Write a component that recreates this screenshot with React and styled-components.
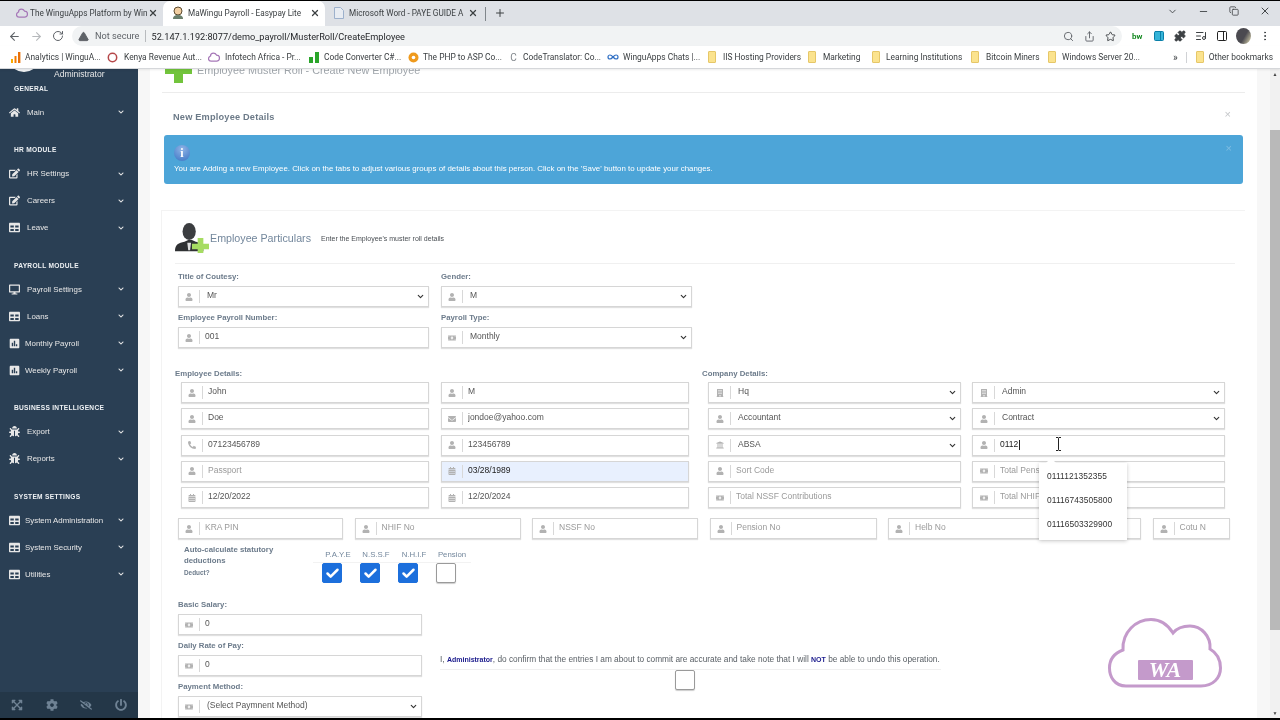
import styled, { createGlobalStyle } from 'styled-components';
import {
  ArrowLeft, ArrowRight, RotateCw, AlertTriangle, Search, Share, Star, Puzzle, ListMusic,
  PanelRight, MoreVertical, ChevronDown, Minus, Copy, X, Plus, Infinity as InfinityIcon, Check,
} from 'lucide-react';
import {
  FaHome, FaEdit, FaTable, FaDesktop, FaPoll, FaBug, FaChevronDown, FaExpandArrowsAlt,
  FaCog, FaEyeSlash, FaPowerOff, FaUser, FaEnvelope, FaPhoneAlt, FaCalendarAlt, FaUniversity,
  FaMoneyBillAlt, FaBuilding,
} from 'react-icons/fa';

const GlobalStyle = createGlobalStyle`
  html, body { margin: 0; padding: 0; background: #000; overflow: hidden; }
  * { box-sizing: border-box; }
`;

const Screen = styled.div`
  width: 1280px;
  height: 720px;
  display: flex;
  flex-direction: column;
  overflow: hidden;
  background: #000;
  padding: 1px 0 2px;
  font-family: 'Liberation Sans', Arial, sans-serif;
  filter: blur(0.3px);
`;

/* browser chrome */
const TabStrip = styled.div`
  height: 25px;
  flex: none;
  display: flex;
  align-items: flex-end;
  background: #dee1e6;
  padding-left: 13px;
  font-family: Roboto, sans-serif;
  font-size: 8.2px;
  color: #3c4043;
`;

const Tab = styled.div`
  width: ${p => p.$w}px;
  height: 25px;
  display: flex;
  align-items: center;
  gap: ${p => p.$gap}px;
  padding: 0 5px 2px ${p => p.$pad}px;
  border-radius: 7px 7px 0 0;
  background: ${p => (p.$active ? '#fff' : 'transparent')};
  svg { flex: none; }
`;

const TabTitle = styled.span`
  flex: 1;
  min-width: 0;
  white-space: nowrap;
`;

const TabSep = styled.span`
  width: 1px;
  height: 14px;
  margin: 0 8px 5px 2px;
  background: #80868b;
`;

const NewTab = styled.span`
  display: flex;
  padding-bottom: 7px;
`;

const WindowControls = styled.div`
  margin-left: auto;
  height: 25px;
  display: flex;
  align-items: center;
  padding: 0 9px 5px 0;
  gap: 20px;
  color: #44474a;
`;

const ToolBar = styled.div`
  height: 20px;
  flex: none;
  display: flex;
  align-items: center;
  background: #fff;
  padding-left: 8px;
  color: #5f6368;
  font-family: Roboto, sans-serif;
`;

const NavIcons = styled.div`
  width: 64px;
  display: flex;
  gap: 9px;
`;

const Omnibox = styled.div`
  width: 1050px;
  height: 20px;
  display: flex;
  align-items: center;
  padding: 0 6px;
  border-radius: 10px;
  background: #f1f3f4;
  font-size: 9.2px;
`;

const NotSecure = styled.span`
  margin-left: 6px;
  padding-right: 6px;
  border-right: 1px solid #b8bbbe;
  line-height: 12px;
  color: #5f6368;
`;

const Url = styled.span`
  margin-left: 5px;
  color: #26282b;
`;

const OmniActions = styled.div`
  margin-left: auto;
  display: flex;
  gap: 10px;
`;

const ExtIcons = styled.div`
  margin-left: 10px;
  display: flex;
  align-items: center;
  gap: 9px;
  color: #3c4043;
`;

const BwBadge = styled.span`
  width: 12px;
  font-size: 8px;
  font-weight: 700;
  color: #12881f;
`;

const AvatarDot = styled.span`
  width: 15px;
  height: 16px;
  margin: 0 -1px;
  border-radius: 50%;
  background: linear-gradient(120deg, #4b4a50 55%, #e5dfb6);
`;

const BookmarkBar = styled.div`
  height: 23px;
  flex: none;
  display: flex;
  align-items: center;
  padding: 0 7px 0 10px;
  background: #fff;
  border-bottom: 1px solid #d5d7da;
  box-shadow: 0 1px 2px rgba(0, 0, 0, 0.08);
  position: relative;
  z-index: 2;
  font-family: Roboto, sans-serif;
  font-size: 8.4px;
  color: #3c4043;
`;

const Bookmark = styled.div`
  width: ${p => p.$w}px;
  display: flex;
  align-items: center;
  gap: ${p => p.$gap || 5}px;
  white-space: nowrap;
`;

const BookmarkEnd = styled.div`
  margin-left: auto;
  display: flex;
  align-items: center;
  gap: 5px;
  white-space: nowrap;
`;

const MoreMarks = styled.span`
  font-size: 10px;
  padding-right: 8px;
  margin-right: 4px;
  border-right: 1px solid #d0d2d5;
`;

const FolderMark = styled.span`
  width: 8px;
  height: 12px;
  flex: none;
  background: #fbe38e;
  border: 1px solid #e6c768;
  border-radius: 1px;
`;

const Fav = styled.span`
  width: 11px;
  height: 11px;
  flex: none;
  display: inline-flex;
  align-items: center;
  justify-content: center;
  font-size: 10px;
  line-height: 11px;
  color: ${p => p.$c || '#80868b'};
`;

/* page */
const Body = styled.div`
  flex: 1;
  min-height: 0;
  display: flex;
  background: #fff;
`;

const Sidebar = styled.aside`
  width: 138px;
  flex: none;
  display: flex;
  flex-direction: column;
  background: #2a3f54;
  color: #e7e7e7;
  font-size: 7.9px;
  overflow: hidden;
`;

const Profile = styled.div`
  height: 9px;
  flex: none;
  display: flex;
  padding-left: 8px;
`;

const ProfilePic = styled.span`
  width: 32px;
  height: 32px;
  flex: none;
  align-self: flex-end;
  margin-bottom: 6px;
  border-radius: 50%;
  background: #2f80c2;
  border: 3px solid #f2f4f6;
`;

const ProfileName = styled.span`
  margin-left: 14px;
  font-size: 8.6px;
  line-height: 10px;
`;

const SectionTitle = styled.div`
  height: 20px;
  flex: none;
  display: flex;
  align-items: center;
  padding-left: 14px;
  margin-top: ${p => (p.$first ? 0 : 14.5)}px;
  font-size: 6.6px;
  font-weight: 700;
  letter-spacing: 0.3px;
  color: #eef1f4;
`;

const MenuItem = styled.div`
  height: 27px;
  flex: none;
  display: flex;
  align-items: center;
  padding: 1px 14px 0 9px;
  gap: ${p => p.$gap}px;
  svg:first-child { flex: none; font-size: 11px; }
  svg:last-child { margin-left: auto; font-size: 6px; flex: none; }
`;

const SideFooter = styled.div`
  margin-top: auto;
  height: 26px;
  flex: none;
  display: grid;
  grid-template-columns: repeat(4, 1fr);
  align-items: center;
  justify-items: center;
  background: #243748;
  color: #6f8294;
  font-size: 12px;
`;

const Main = styled.main`
  flex: 1;
  min-width: 0;
  padding: 0 13px 0 12px;
  background: #f7f7f7;
`;

const Content = styled.div`
  height: 100%;
  padding: 0 12px;
  background: #fff;
  overflow: hidden;
  position: relative;
`;

const PageHead = styled.div`
  height: 24px;
  display: flex;
  align-items: flex-start;
  padding-left: 3px;
  border-bottom: 1px solid #ececec;
`;

const PageHeadIcon = styled.svg`
  width: 27px;
  height: 27px;
  flex: none;
  margin-top: -13px;
`;

const PageHeadText = styled.span`
  margin: -5px 0 0 5px;
  font-size: 10.8px;
  line-height: 12px;
  color: #a0a6ac;
`;

const PanelHead = styled.div`
  height: 42px;
  display: flex;
  justify-content: space-between;
  padding: 18px 14px 0 11px;
`;

const PanelTitle = styled.h2`
  margin: 0;
  font-size: 9.2px;
  line-height: 12px;
  letter-spacing: 0.2px;
  font-weight: 700;
  color: #6c7a88;
`;

const CloseMark = styled.span`
  margin-top: -3px;
  font-size: 11px;
  line-height: 12px;
  color: ${p => p.$c || '#c4c6c9'};
`;

const Alert = styled.div`
  height: 49px;
  margin: 0 2px;
  padding: 10px 11px 0 10px;
  border-radius: 3px;
  background: #4da5d8;
  color: #fff;
  font-size: 7.9px;
`;

const AlertTop = styled.div`
  display: flex;
  justify-content: space-between;
  height: 16px;
`;

const InfoBadge = styled.span`
  width: 16px;
  height: 16px;
  border-radius: 50%;
  display: flex;
  align-items: center;
  justify-content: center;
  font-family: 'Liberation Serif', serif;
  font-size: 12px;
  font-weight: 700;
  color: #fff;
  background: radial-gradient(circle at 50% 25%, #8fb4e6, #3b74c4);
`;

const AlertText = styled.div`
  margin-top: 2px;
  line-height: 11px;
`;

const Card = styled.section`
  margin: 26px 0 0 -1px;
  padding: 1px 10px 0 13px;
  border: 1px solid #f3f3f3;
  border-right: 0;
  border-bottom: 0;
`;

const CardHead = styled.div`
  height: 52px;
  display: flex;
  align-items: center;
  border-bottom: 1px solid #f0f0f0;
`;

const CardHeadTitle = styled.span`
  margin-left: 1px;
  font-size: 10.7px;
  color: #73879c;
`;

const CardHeadNote = styled.span`
  margin-left: 10px;
  margin-top: 1px;
  font-size: 7px;
  color: #4a4f54;
`;

const TopForm = styled.div`
  margin: 7px 0 0 3px;
  display: grid;
  grid-template-columns: 251px 251px;
  column-gap: 12px;
`;

const FormBlock = styled.div`
  height: 41px;
`;

const Label = styled.div`
  height: 10px;
  margin-bottom: ${p => p.$mb ?? 5}px;
  font-size: 7.8px;
  line-height: 12px;
  font-weight: 700;
  color: #6c7b8b;
  white-space: nowrap;
`;

const FieldBox = styled.div`
  position: relative;
  height: 21px;
  display: flex;
  align-items: center;
  background: ${p => (p.$filled ? '#e8f0fe' : '#fff')};
  border: 1px solid #d6d6d6;
  box-shadow: 0 1px 1px rgba(0, 0, 0, 0.12);
`;

const FieldIcon = styled.span`
  width: var(--slot, 21px);
  height: 13px;
  flex: none;
  display: flex;
  align-items: center;
  justify-content: center;
  border-right: 1px solid #d8d8d8;
  color: #b2b2b2;
  font-size: 8px;
`;

const FieldInput = styled.input`
  flex: 1;
  width: 100%;
  min-width: 0;
  height: 100%;
  padding: 0 0 3px 5px;
  border: 0;
  outline: 0;
  background: transparent;
  font-family: 'Liberation Sans', Arial, sans-serif;
  font-size: 8.5px;
  color: ${p => (p.$dark ? '#222' : '#555')};
  &::placeholder { color: #9a9a9a; opacity: 1; }
`;

const FieldSelect = styled.select`
  flex: 1;
  min-width: 0;
  height: 100%;
  padding: 0 0 3px 7px;
  border: 0;
  outline: 0;
  appearance: none;
  background: transparent;
  font-family: 'Liberation Sans', Arial, sans-serif;
  font-size: 8.5px;
  color: #555;
`;

const SelectArrow = styled.span`
  display: flex;
  padding-right: 3px;
  color: #333;
  pointer-events: none;
`;

const DetailsRow = styled.div`
  margin-top: 15px;
  display: flex;
  gap: 12px;
`;

const DetailsGroup = styled.div`
  width: ${p => p.$w}px;
`;

const DetailsGrid = styled.div`
  --slot: ${p => p.$slot}px;
  margin-left: 6px;
  display: grid;
  grid-template-columns: repeat(2, ${p => p.$col}px);
  column-gap: ${p => p.$gap}px;
  row-gap: 5.25px;
`;

const NumbersRow = styled.div`
  margin: 10px 0 0 3px;
  display: grid;
  grid-template-columns: 165px 166px 166px 167px 253px 77px;
  column-gap: 11.5px;
`;

const DeductRow = styled.div`
  height: 55px;
  margin-top: 5px;
  padding-left: 9px;
  display: flex;
`;

const DeductText = styled.div`
  width: 129px;
  font-size: 7.8px;
  line-height: 11px;
  font-weight: 700;
  color: #6c7b8b;
`;

const DeductNote = styled.div`
  margin-top: 2px;
  font-size: 6.4px;
  line-height: 10px;
`;

const DeductCol = styled.div`
  width: 38px;
  margin-top: 6px;
  display: flex;
  flex-direction: column;
  align-items: center;
`;

const DeductLabel = styled.div`
  height: 13px;
  align-self: stretch;
  padding-left: 6px;
  margin-right: -6px;
  text-align: center;
  font-size: 7.8px;
  line-height: 10px;
  white-space: nowrap;
  color: #73879c;
  border-bottom: 1px solid #f2f2f2;
`;

const CheckBox = styled.span`
  width: ${p => p.$w || 20}px;
  height: 20px;
  display: flex;
  align-items: center;
  justify-content: center;
  border-radius: 2px;
  color: #fff;
  background: ${p => (p.$on ? '#1c6fdc' : '#fff')};
  border: 1px solid ${p => (p.$on ? '#1c6fdc' : '#9a9a9a')};
  box-shadow: ${p => (p.$on ? 'none' : '0 1px 1px rgba(0,0,0,.2)')};
`;

const BottomRow = styled.div`
  margin-left: 3px;
  display: flex;
  gap: 18px;
`;

const PayCol = styled.div`
  width: 244px;
  flex: none;
`;

const ConfirmCol = styled.div`
  width: 501px;
  padding-top: 55px;
`;

const ConfirmText = styled.div`
  height: 16px;
  font-size: 8.3px;
  line-height: 10px;
  white-space: nowrap;
  color: #5a6066;
  border-bottom: 1px solid #f0f0f0;
`;

const ConfirmName = styled.b`
  font-size: 7px;
  color: #1a1a8c;
`;

const ConfirmBox = styled(CheckBox)`
  margin-left: 235px;
`;

const Watermark = styled.svg`
  position: absolute;
  left: 958px;
  top: 549px;
  width: 114px;
  height: 70px;
`;

const Suggestions = styled.div`
  position: absolute;
  z-index: 3;
  left: 66px;
  top: 27px;
  width: 88px;
  height: 77px;
  padding-top: 1px;
  background: #fff;
  box-shadow: 0 1px 4px rgba(0, 0, 0, 0.22);
  font-size: 8.4px;
  color: #333;
  &::before {
    content: '';
    position: absolute;
    top: -5px;
    left: 7px;
    border: 5px solid transparent;
    border-top: 0;
    border-bottom-color: #fff;
  }
`;

const Suggestion = styled.div`
  height: 24px;
  padding-left: 8px;
  line-height: 24px;
  letter-spacing: 0.1px;
`;

const TextCaret = styled.span`
  position: absolute;
  left: 46px;
  top: 4px;
  width: 1px;
  height: 10px;
  background: #222;
`;

const IBeam = styled.svg`
  position: absolute;
  left: 82px;
  top: 1px;
  width: 7px;
  height: 14px;
`;

const ScrollTrack = styled.div`
  width: 10px;
  flex: none;
  display: flex;
  flex-direction: column;
  background: #f1f1f1;
`;

const ScrollArrow = styled.span`
  height: 10px;
  flex: none;
  text-align: center;
  font-size: 5px;
  line-height: 10px;
  color: #444;
`;

const ScrollThumb = styled.div`
  height: 500px;
  margin-top: 51px;
  margin-bottom: auto;
  background: #b9b9b9;
`;

const tabIcon = {
  cloud: (
    <svg width="12" height="10" viewBox="0 0 24 20" fill="none" stroke="#a678b8" strokeWidth="2.5">
      <path d="M6 18C2 18 1 15 1 13c0-3 2-4 4-5C5 4 8 2 11 2c3 0 5 2 6 4 3 0 6 2 6 6 0 3-2 6-5 6Z" />
    </svg>
  ),
  face: (
    <svg width="12" height="13" viewBox="0 0 12 13">
      <circle cx="6" cy="5" r="4" fill="#f2cfa2" stroke="#5b4a2f" />
      <path d="M1 13c0-3 2-4 5-4s5 1 5 4Z" fill="#6a7f6c" />
    </svg>
  ),
  doc: (
    <svg width="10" height="12" viewBox="0 0 10 12" fill="#e8ecf2" stroke="#9db1cc">
      <path d="M.5.5h6l3 3v8H.5Z" />
    </svg>
  ),
};

const bars = (
  <svg width="11" height="11" viewBox="0 0 11 11">
    <path d="M1 7h2v4H1Z" fill="#f9ab00" />
    <path d="M4.5 4h2v7h-2Z" fill="#f57c00" />
    <path d="M8 0h2.400v11H8Z" fill="#e8710a" />
  </svg>
);

const bookmarks = [
  { w: 97, gap: 4, title: 'Analytics | WinguA...', icon: bars },
  { w: 101, gap: 6, title: 'Kenya Revenue Aut...', icon: <svg width="11" height="11" viewBox="0 0 11 11" fill="none" stroke="#b5484a" strokeWidth="1.5"><circle cx="5.5" cy="5.5" r="4.2" /></svg> },
  { w: 101, gap: 5, title: 'Infotech Africa - Pr...', icon: tabIcon.cloud },
  { w: 99, gap: 4, title: 'Code Converter C#...', icon: <Fav $c="#2aa52a"><svg width="11" height="11" viewBox="0 0 11 11" fill="#2aa52a"><path d="M0 5h4v6H0ZM6 0h4v11H6Z" /></svg></Fav> },
  { w: 100, gap: 4, title: 'The PHP to ASP Co...', icon: <svg width="11" height="11" viewBox="0 0 11 11"><circle cx="5.5" cy="5.5" r="5" fill="#ef9a1d" /><circle cx="5.5" cy="5.5" r="1.8" fill="#fff" /></svg> },
  { w: 99, gap: 4, title: 'CodeTranslator: Co...', icon: <Fav>C</Fav> },
  { w: 101, gap: 4, title: 'WinguApps Chats |...', icon: <InfinityIcon size={12} color="#2f6fc4" strokeWidth={2.4} /> },
  { w: 100, gap: 7, title: 'IIS Hosting Providers' },
  { w: 64, gap: 7, title: 'Marketing' },
  { w: 99, gap: 6, title: 'Learning Institutions' },
  { w: 77, gap: 7, title: 'Bitcoin Miners' },
  { w: 100, gap: 6, title: 'Windows Server 20...' },
];

const menu = [
  { title: 'GENERAL', first: true, items: [{ icon: <FaHome />, label: 'Main', gap: 7 }] },
  { title: 'HR MODULE', items: [
    { icon: <FaEdit />, label: 'HR Settings', gap: 7 },
    { icon: <FaEdit />, label: 'Careers', gap: 7 },
    { icon: <FaTable />, label: 'Leave', gap: 7 },
  ] },
  { title: 'PAYROLL MODULE', items: [
    { icon: <FaDesktop />, label: 'Payroll Settings', gap: 7 },
    { icon: <FaTable />, label: 'Loans', gap: 7 },
    { icon: <FaPoll />, label: 'Monthly Payroll', gap: 5 },
    { icon: <FaPoll />, label: 'Weekly Payroll', gap: 5 },
  ] },
  { title: 'BUSINESS INTELLIGENCE', items: [
    { icon: <FaBug />, label: 'Export', gap: 7 },
    { icon: <FaBug />, label: 'Reports', gap: 7 },
  ] },
  { title: 'SYSTEM SETTINGS', items: [
    { icon: <FaTable />, label: 'System Administration', gap: 5 },
    { icon: <FaTable />, label: 'System Security', gap: 5 },
    { icon: <FaTable />, label: 'Utilities', gap: 5 },
  ] },
];

function Field({ icon = <FaUser />, value, placeholder, select, filled, dark, children }) {
  return (
    <FieldBox $filled={filled}>
      <FieldIcon>{icon}</FieldIcon>
      {select
        ? <FieldSelect defaultValue={value}><option>{value}</option></FieldSelect>
        : <FieldInput defaultValue={value} placeholder={placeholder} $dark={dark} />}
      {select && <SelectArrow><ChevronDown size={9} strokeWidth={3} /></SelectArrow>}
      {children}
    </FieldBox>
  );
}

function LabelledField({ label, ...rest }) {
  return (
    <FormBlock>
      <Label>{label}</Label>
      <Field {...rest} />
    </FormBlock>
  );
}

export default function App() {
  return (
    <Screen>
      <GlobalStyle />
      <TabStrip>
        <Tab $w={150} $pad={3} $gap={2}>
          {tabIcon.cloud}<TabTitle>The WinguApps Platform by Win</TabTitle><X size={10} strokeWidth={3} />
        </Tab>
        <Tab $w={162} $pad={9} $gap={4} $active>
          {tabIcon.face}<TabTitle>MaWingu Payroll - Easypay Lite</TabTitle><X size={10} strokeWidth={3} />
        </Tab>
        <Tab $w={158} $pad={9} $gap={5}>
          {tabIcon.doc}<TabTitle>Microsoft Word - PAYE GUIDE A</TabTitle><X size={10} strokeWidth={3} />
        </Tab>
        <TabSep />
        <NewTab><Plus size={12} /></NewTab>
        <WindowControls>
          <ChevronDown size={11} />
          <Minus size={11} />
          <Copy size={10} />
          <X size={12} />
        </WindowControls>
      </TabStrip>

      <ToolBar>
        <NavIcons>
          <ArrowLeft size={13} />
          <ArrowRight size={13} color="#b6b9bc" />
          <RotateCw size={12} />
        </NavIcons>
        <Omnibox>
          <AlertTriangle size={11} fill="#5f6368" color="#5f6368" />
          <NotSecure>Not secure</NotSecure>
          <Url>52.147.1.192:8077/demo_payroll/MusterRoll/CreateEmployee</Url>
          <OmniActions>
            <Search size={11} />
            <Share size={11} />
            <Star size={11} color="#3c4043" />
          </OmniActions>
        </Omnibox>
        <ExtIcons>
          <BwBadge>bw</BwBadge>
          <PanelRight size={12} color="#0a7fa8" fill="#35b4d8" />
          <Puzzle size={12} fill="#3c4043" />
          <ListMusic size={12} />
          <PanelRight size={12} color="#222" />
          <AvatarDot />
          <MoreVertical size={12} />
        </ExtIcons>
      </ToolBar>

      <BookmarkBar>
        {bookmarks.map(b => (
          <Bookmark key={b.title} $w={b.w} $gap={b.gap}>
            {b.icon || <FolderMark />}
            {b.title}
          </Bookmark>
        ))}
        <BookmarkEnd>
          <MoreMarks>»</MoreMarks>
          <FolderMark />
          Other bookmarks
        </BookmarkEnd>
      </BookmarkBar>

      <Body>
        <Sidebar>
          <Profile>
            <ProfilePic />
            <ProfileName>Administrator</ProfileName>
          </Profile>
          {menu.map(section => (
            <div key={section.title}>
              <SectionTitle $first={section.first}>{section.title}</SectionTitle>
              {section.items.map(item => (
                <MenuItem key={item.label} $gap={item.gap}>
                  {item.icon}
                  {item.label}
                  <FaChevronDown />
                </MenuItem>
              ))}
            </div>
          ))}
          <SideFooter>
            <FaExpandArrowsAlt />
            <FaCog />
            <FaEyeSlash />
            <FaPowerOff />
          </SideFooter>
        </Sidebar>

        <Main>
          <Content>
            <PageHead>
              <PageHeadIcon viewBox="0 0 27 27">
                <path d="M9 0h9v9h9v9h-9v9H9v-9H0V9h9Z" fill="#72c43c" />
              </PageHeadIcon>
              <PageHeadText>Employee Muster Roll - Create New Employee</PageHeadText>
            </PageHead>

            <PanelHead>
              <PanelTitle>New Employee Details</PanelTitle>
              <CloseMark>×</CloseMark>
            </PanelHead>

            <Alert>
              <AlertTop>
                <InfoBadge>i</InfoBadge>
                <CloseMark $c="#7fbde2">×</CloseMark>
              </AlertTop>
              <AlertText>
                You are Adding a new Employee. Click on the tabs to adjust various groups of details about this person. Click on the 'Save' button to update your changes.
              </AlertText>
            </Alert>

            <Card>
              <CardHead>
                <svg width="34" height="32" viewBox="0 0 36 32">
                  <path d="M0 30c0-7 4-9 10-10l4-2h4l4 2c4 1 6 2 8 6v4Z" fill="#2f3133" />
                  <ellipse cx="15" cy="9" rx="7" ry="9" fill="#3b3d40" />
                  <path d="M13 21h4l-1 8h-2Z" fill="#dfe0e0" />
                  <path d="M24 16h6v6h6v6h-6v4h-6v-4h-6v-6h6Z" fill="#a6dc62" />
                </svg>
                <CardHeadTitle>Employee Particulars</CardHeadTitle>
                <CardHeadNote>Enter the Employee's muster roll details</CardHeadNote>
              </CardHead>

              <TopForm>
                <LabelledField label="Title of Coutesy:" value="Mr" select />
                <LabelledField label="Gender:" value="M" select />
                <LabelledField label="Employee Payroll Number:" value="001" />
                <LabelledField label="Payroll Type:" value="Monthly" select icon={<FaMoneyBillAlt />} />
              </TopForm>

              <DetailsRow>
                <DetailsGroup $w={515}>
                  <Label $mb={4}>Employee Details:</Label>
                  <DetailsGrid $col={248} $gap={12} $slot={21}>
                    <Field value="John" />
                    <Field value="M" />
                    <Field value="Doe" />
                    <Field value="jondoe@yahoo.com" icon={<FaEnvelope />} />
                    <Field value="07123456789" icon={<FaPhoneAlt />} />
                    <Field value="123456789" />
                    <Field placeholder="Passport" />
                    <Field value="03/28/1989" icon={<FaCalendarAlt />} filled dark />
                    <Field value="12/20/2022" icon={<FaCalendarAlt />} />
                    <Field value="12/20/2024" icon={<FaCalendarAlt />} />
                  </DetailsGrid>
                </DetailsGroup>
                <DetailsGroup $w={530}>
                  <Label $mb={4}>Company Details:</Label>
                  <DetailsGrid $col={253} $gap={11} $slot={22}>
                    <Field value="Hq" select icon={<FaBuilding />} />
                    <Field value="Admin" select icon={<FaBuilding />} />
                    <Field value="Accountant" select />
                    <Field value="Contract" select />
                    <Field value="ABSA" select icon={<FaUniversity />} />
                    <Field value="0112" dark>
                      <TextCaret />
                      <IBeam viewBox="0 0 7 14" fill="none" stroke="#222" strokeWidth="1">
                        <path d="M1 .5h2l.5 1 .5-1h2M3.500 1.500v11M1 13.500h2l.5-1 .5 1h2" />
                      </IBeam>
                      <Suggestions>
                        <Suggestion>0111121352355</Suggestion>
                        <Suggestion>01116743505800</Suggestion>
                        <Suggestion>01116503329900</Suggestion>
                      </Suggestions>
                    </Field>
                    <Field placeholder="Sort Code" />
                    <Field placeholder="Total Pension Contributions" icon={<FaMoneyBillAlt />} />
                    <Field placeholder="Total NSSF Contributions" icon={<FaMoneyBillAlt />} />
                    <Field placeholder="Total NHIF Contributions" icon={<FaMoneyBillAlt />} />
                  </DetailsGrid>
                </DetailsGroup>
              </DetailsRow>

              <NumbersRow>
                <Field placeholder="KRA PIN" />
                <Field placeholder="NHIF No" />
                <Field placeholder="NSSF No" />
                <Field placeholder="Pension No" />
                <Field placeholder="Helb No" />
                <Field placeholder="Cotu N" />
              </NumbersRow>

              <DeductRow>
                <DeductText>
                  Auto-calculate statutory deductions
                  <DeductNote>Deduct?</DeductNote>
                </DeductText>
                {[['P.A.Y.E', true], ['N.S.S.F', true], ['N.H.I.F', true], ['Pension', false]].map(([name, on]) => (
                  <DeductCol key={name}>
                    <DeductLabel>{name}</DeductLabel>
                    <CheckBox $on={on}>{on && <Check size={15} strokeWidth={4} />}</CheckBox>
                  </DeductCol>
                ))}
              </DeductRow>

              <BottomRow>
                <PayCol>
                  <LabelledField label="Basic Salary:" value="0" icon={<FaMoneyBillAlt />} />
                  <LabelledField label="Daily Rate of Pay:" value="0" icon={<FaMoneyBillAlt />} />
                  <LabelledField label="Payment Method:" value="(Select Paymnent Method)" select icon={<FaMoneyBillAlt />} />
                </PayCol>
                <ConfirmCol>
                  <ConfirmText>
                    I, <ConfirmName>Administrator</ConfirmName>, do confirm that the entries I am about to commit are accurate and take note that I will <ConfirmName>NOT</ConfirmName> be able to undo this operation.
                  </ConfirmText>
                  <ConfirmBox />
                </ConfirmCol>
              </BottomRow>
            </Card>

            <Watermark viewBox="0 0 114 70">
              <path
                d="M18 68C6 68 1.500 58 1.500 50 1.500 41 7 35 15 32 14 14 28 1.500 43 1.500 52 1.500 60 7 65 15 69 10 76 8 82 8 93 8 103 18 102 31 109 35 112.500 42 112.500 50 112.500 60 105 68 93 68Z"
                fill="#fff"
                stroke="#c49acb"
                strokeWidth="3"
              />
              <rect x="30" y="42" width="55" height="20" rx="1" fill="#c49acb" />
              <text x="57" y="59" textAnchor="middle" fontFamily="'Liberation Serif', serif" fontStyle="italic" fontWeight="700" fontSize="22" fill="#fff">WA</text>
            </Watermark>
          </Content>
        </Main>

        <ScrollTrack>
          <ScrollArrow>▲</ScrollArrow>
          <ScrollThumb />
          <ScrollArrow>▼</ScrollArrow>
        </ScrollTrack>
      </Body>
    </Screen>
  );
}
